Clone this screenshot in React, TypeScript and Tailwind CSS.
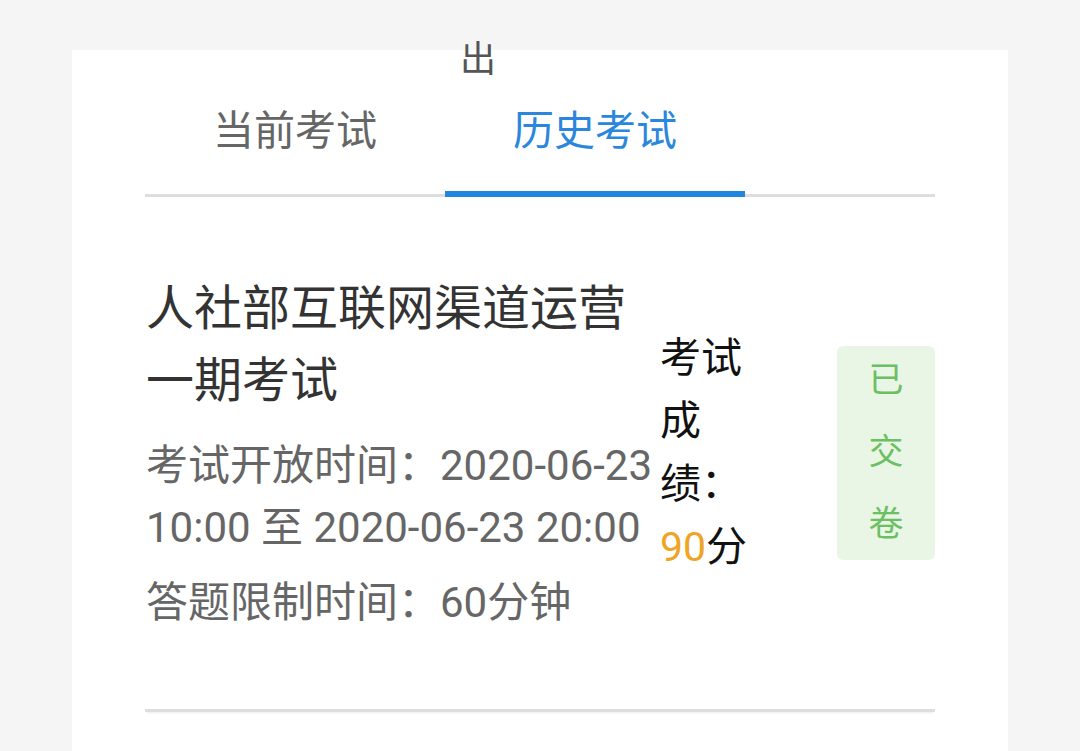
import { useState } from 'react'

const tabs = ['当前考试', '历史考试']

function ExamRow() {
  return (
    <div className="flex h-[515px] items-center border-b-[3px] border-[#dedede] shadow-[0_3px_2px_-2px_rgba(0,0,0,0.08)]">
      <div className="w-[515px] shrink-0 pl-px">
        <h2 className="text-[48px] leading-[72px] text-[#333]">人社部互联网渠道运营一期考试</h2>
        <p className="mt-[18px] text-[42px] leading-[62px] text-[#666]">考试开放时间：2020-06-23 10:00 至 2020-06-23 20:00</p>
        <p className="mt-[13px] text-[42px] leading-[62px] text-[#666]">答题限制时间：60分钟</p>
      </div>
      <div className="w-[110px] shrink-0 text-[41px] leading-[63px] text-[#111]">
        考试成绩：<span className="text-[#f0a424]">90</span>分
      </div>
      <div className="ml-auto flex h-[214px] w-[98px] shrink-0 flex-col items-center justify-center rounded-[6px] bg-[#e9f6e6] text-[35px] leading-[72px] text-[#6cbf62]">
        <span>已</span>
        <span>交</span>
        <span>卷</span>
      </div>
    </div>
  )
}

export default function App() {
  const [active, setActive] = useState(1)

  return (
    <div
      className="min-h-[751px] bg-[#f5f5f5] pt-[50px]"
      style={{ fontFamily: "Roboto, 'Noto Sans CJK SC', sans-serif" }}
    >
      <div className="relative mx-[72px] min-h-[701px] bg-white px-[73px]">
        <span className="absolute left-[388px] top-[-12px] text-[36px] leading-[44px] text-[#555]">出</span>
        <div className="relative flex border-b-[3px] border-[#dddddd]">
          {tabs.map((t, i) => (
            <div
              key={t}
              role="tab"
              onClick={() => setActive(i)}
              className={`relative h-[144px] w-[300px] cursor-pointer pt-[61px] text-center text-[41px] leading-[40px] ${
                active === i ? 'text-[#2b87dc]' : 'text-[#666]'
              }`}
            >
              {t}
              {active === i && (
                <span className="absolute bottom-[-3px] left-0 h-[6px] w-full bg-[#1f86e2]" />
              )}
            </div>
          ))}
        </div>
        <ExamRow />
      </div>
    </div>
  )
}
